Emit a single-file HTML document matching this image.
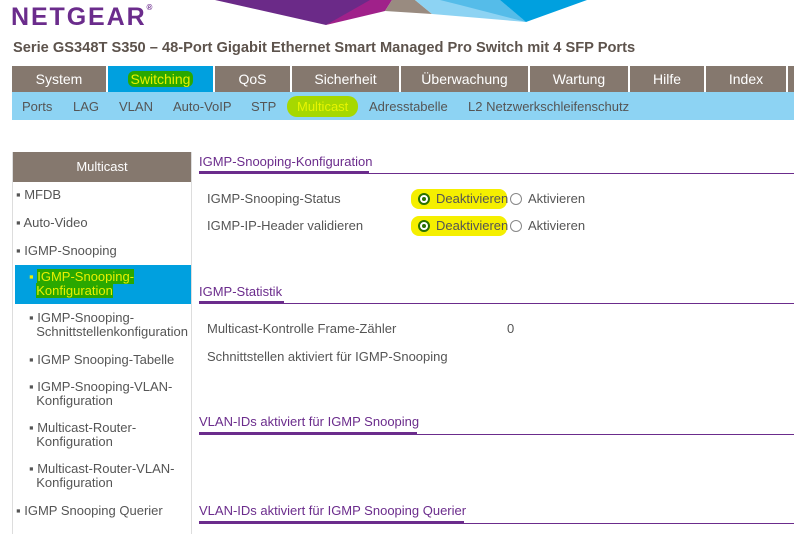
<!DOCTYPE html>
<html><head><meta charset="utf-8"><style>
*{margin:0;padding:0;box-sizing:border-box}
body{width:794px;height:534px;background:#fff;font-family:"Liberation Sans",Arial,sans-serif;position:relative;overflow:hidden;color:#555}
.abs{position:absolute}
.logo{left:11px;top:3px;font-size:25px;font-weight:bold;color:#6b2c8c;letter-spacing:1.9px}
.title{left:13px;top:40px;font-size:14.65px;font-weight:bold;color:#5d534c}
.nav{left:12px;top:66px;width:782px;height:26px;background:#85786e;display:flex}
.nav div{color:#fff;font-size:14px;text-align:center;line-height:26px;border-right:2px solid #fff}
.sub{left:12px;top:92px;width:782px;height:28px;background:#8dd3f3;font-size:13px;color:#555}
.sub span{position:absolute;top:7px}
.lp{left:12px;top:152px;width:180px;height:382px;border-left:1px solid #ddd;border-right:1px solid #ddd}
.lph{height:30px;background:#85786e;color:#fff;text-align:center;line-height:30px;font-size:13px}
.li{position:absolute;font-size:13px;color:#555;line-height:14px}
.h{position:absolute;font-size:13px;color:#6b2c8c;left:199px}
.line{position:absolute;left:199px;width:595px;height:1px;background:#6b2c8c}
.thick{position:absolute;left:199px;height:3px;background:#6b2c8c}
.t{position:absolute;font-size:13px;color:#555;left:207px}
.radio{position:absolute;width:12px;height:12px;border-radius:50%;border:1px solid #888;background:#fff}
</style></head><body>
<svg class="abs" style="left:0;top:0" width="794" height="30">
<polygon points="215,0 376,0 326,25" fill="#6b2a88"/>
<polygon points="370,0 392,0 385,11 326,25" fill="#a0218a"/>
<polygon points="392,0 415,0 432,14 385,11" fill="#998b80"/>
<polygon points="415,0 500,0 526,22 432,14" fill="#8dd3f3"/>
<polygon points="440,0 500,0 526,22 460,5" fill="#55bce9"/>
<polygon points="500,0 587,0 526,22" fill="#00a0df"/>
</svg>
<div class="abs logo">NETGEAR<span style="font-size:8px;vertical-align:top">®</span></div>
<div class="abs title">Serie GS348T S350 – 48-Port Gigabit Ethernet Smart Managed Pro Switch mit 4 SFP Ports</div>
<div class="abs nav">
<div style="width:96px">System</div>
<div style="width:107px;background:#00a0df"><span style="background:#2aa800;color:#e8f000;padding:0 3px;border-radius:6px">Switching</span></div>
<div style="width:77px">QoS</div>
<div style="width:109px">Sicherheit</div>
<div style="width:129px">Überwachung</div>
<div style="width:100px">Wartung</div>
<div style="width:76px">Hilfe</div>
<div style="width:82px">Index</div>
<div style="flex:1;border:none"></div>
</div>
<div class="abs sub">
<span style="left:10px">Ports</span><span style="left:61px">LAG</span><span style="left:107px">VLAN</span><span style="left:161px">Auto-VoIP</span><span style="left:239px">STP</span>
<span style="left:275px;top:4px;padding:3px 10px;background:#a6d800;color:#e8f500;border-radius:10px">Multicast</span>
<span style="left:357px">Adresstabelle</span><span style="left:456px">L2 Netzwerkschleifenschutz</span>
</div>
<div class="abs lp"><div class="lph">Multicast</div></div>
<div class="li" style="left:16px;top:188px">▪ MFDB</div>
<div class="li" style="left:16px;top:216px">▪ Auto-Video</div>
<div class="li" style="left:16px;top:244px">▪ IGMP-Snooping</div>
<div class="abs" style="left:15px;top:265px;width:176px;height:39px;background:#00a0df"></div>
<div class="li" style="left:29px;top:270px;color:#e8f000">▪ <span style="background:#2aa800">IGMP-Snooping-</span><br>&nbsp;&nbsp;<span style="background:#2aa800">Konfiguration</span></div>
<div class="li" style="left:29px;top:311px">▪ IGMP-Snooping-<br>&nbsp;&nbsp;Schnittstellenkonfiguration</div>
<div class="li" style="left:29px;top:353px">▪ IGMP Snooping-Tabelle</div>
<div class="li" style="left:29px;top:380px">▪ IGMP-Snooping-VLAN-<br>&nbsp;&nbsp;Konfiguration</div>
<div class="li" style="left:29px;top:421px">▪ Multicast-Router-<br>&nbsp;&nbsp;Konfiguration</div>
<div class="li" style="left:29px;top:462px">▪ Multicast-Router-VLAN-<br>&nbsp;&nbsp;Konfiguration</div>
<div class="li" style="left:16px;top:504px">▪ IGMP Snooping Querier</div>

<div class="h" style="top:154px">IGMP-Snooping-Konfiguration</div>
<div class="thick" style="top:171px;width:170px"></div><div class="line" style="top:173px"></div>
<div class="t" style="top:191px">IGMP-Snooping-Status</div>
<div class="t" style="top:218px">IGMP-IP-Header validieren</div>
<div class="abs" style="left:411px;top:189px;width:96px;height:20px;background:#f5ef00;border-radius:8px"></div>
<div class="abs" style="left:411px;top:216px;width:96px;height:20px;background:#f5ef00;border-radius:8px"></div>
<div class="radio" style="left:418px;top:193px;border:2px solid #2a7000"><div style="width:4px;height:4px;background:#2a7000;border-radius:50%;margin:2px"></div></div>
<div class="radio" style="left:418px;top:220px;border:2px solid #2a7000"><div style="width:4px;height:4px;background:#2a7000;border-radius:50%;margin:2px"></div></div>
<div class="t" style="left:436px;top:191px;color:#555">Deaktivieren</div>
<div class="t" style="left:436px;top:218px;color:#555">Deaktivieren</div>
<div class="radio" style="left:510px;top:193px"></div><div class="radio" style="left:510px;top:220px"></div>
<div class="t" style="left:528px;top:191px">Aktivieren</div>
<div class="t" style="left:528px;top:218px">Aktivieren</div>

<div class="h" style="top:284px">IGMP-Statistik</div>
<div class="thick" style="top:301px;width:85px"></div><div class="line" style="top:303px"></div>
<div class="t" style="top:321px">Multicast-Kontrolle Frame-Zähler</div>
<div class="t" style="left:507px;top:321px">0</div>
<div class="t" style="top:349px">Schnittstellen aktiviert für IGMP-Snooping</div>

<div class="h" style="top:414px">VLAN-IDs aktiviert für IGMP Snooping</div>
<div class="thick" style="top:432px;width:218px"></div><div class="line" style="top:434px"></div>
<div class="h" style="top:503px">VLAN-IDs aktiviert für IGMP Snooping Querier</div>
<div class="thick" style="top:521px;width:265px"></div><div class="line" style="top:523px"></div>
</body></html>
